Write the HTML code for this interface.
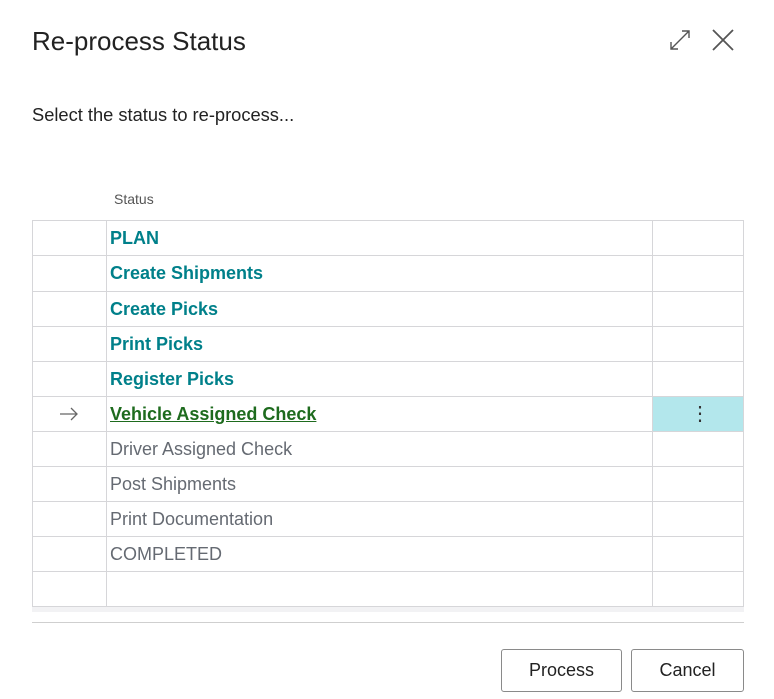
<!DOCTYPE html>
<html><head><meta charset="utf-8"><style>
*{margin:0;padding:0;box-sizing:border-box}
body{width:774px;height:699px;background:#fff;font-family:"Liberation Sans",sans-serif;position:relative;overflow:hidden;color:#212121}
.a{position:absolute}
.row{position:absolute;left:32px;width:712px;height:35px;border-top:1px solid #d6d6d9}
.row .t{position:absolute;left:78px;top:7px;font-size:18px;white-space:nowrap}
.b{color:#00808a;font-weight:bold}
.g{color:#656a72}
.btn{position:absolute;top:649px;height:43px;border:1px solid #8a8a8a;border-radius:3px;font-size:18px;text-align:center;line-height:41px;color:#222}
</style></head><body>
<div class="a" style="left:32px;top:26px;font-size:26px;color:#222">Re-process Status</div>
<svg class="a" style="left:668px;top:28px" width="24" height="24" viewBox="0 0 24 24" fill="none" stroke="#555" stroke-width="1.4"><path d="M3 21L21 3M14 3h7v7M3 14v7h7"/></svg>
<svg class="a" style="left:711px;top:28px" width="24" height="24" viewBox="0 0 24 24" fill="none" stroke="#555" stroke-width="1.8"><path d="M2 2L22 22M22 2L2 22"/></svg>
<div class="a" style="left:32px;top:104px;font-size:18.3px;color:#222">Select the status to re-process...</div>
<div class="a" style="left:114px;top:191px;font-size:14px;color:#555">Status</div>
<div class="a" style="left:32px;top:220px;width:712px;height:387px;border-left:1px solid #d6d6d9;border-right:1px solid #d6d6d9;border-bottom:1px solid #d6d6d9"></div>
<div class="a" style="left:106px;top:220px;width:1px;height:387px;background:#d6d6d9"></div>
<div class="a" style="left:652px;top:220px;width:1px;height:387px;background:#d6d6d9"></div>
<div class="a" style="left:653px;top:397px;width:90px;height:34px;background:#b3e7ec"></div>
<div class="row" style="top:220px"><span class="t b">PLAN</span></div>
<div class="row" style="top:255px"><span class="t b">Create Shipments</span></div>
<div class="row" style="top:291px"><span class="t b">Create Picks</span></div>
<div class="row" style="top:326px"><span class="t b">Print Picks</span></div>
<div class="row" style="top:361px"><span class="t b">Register Picks</span></div>
<div class="row" style="top:396px"><svg class="a" style="left:27px;top:10px" width="20" height="14" viewBox="0 0 20 14" fill="none" stroke="#666" stroke-width="1.3"><path d="M1 7H18M12 1L18 7L12 13"/></svg><span class="t" style="color:#1e6b1e;font-weight:bold;text-decoration:underline">Vehicle Assigned Check</span><span class="a" style="left:658px;top:4px;font-size:20px;color:#333">⋮</span></div>
<div class="row" style="top:431px"><span class="t g">Driver Assigned Check</span></div>
<div class="row" style="top:466px"><span class="t g">Post Shipments</span></div>
<div class="row" style="top:501px"><span class="t g">Print Documentation</span></div>
<div class="row" style="top:536px"><span class="t g">COMPLETED</span></div>
<div class="row" style="top:571px"></div>
<div class="a" style="left:32px;top:607px;width:712px;height:5px;background:#f2f2f4"></div>
<div class="a" style="left:32px;top:622px;width:712px;height:1px;background:#cfcfcf"></div>
<div class="btn" style="left:501px;width:121px">Process</div>
<div class="btn" style="left:631px;width:113px">Cancel</div>
</body></html>
